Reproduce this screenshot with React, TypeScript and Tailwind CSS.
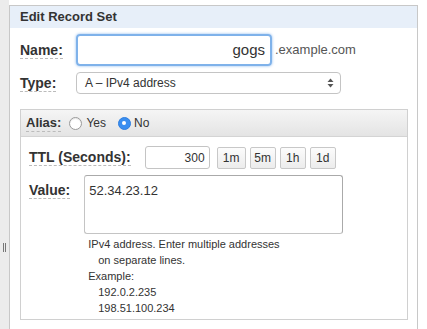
export default function App() {
    const label = "font-bold text-[#333] border-b border-dashed border-[#bbb] leading-[16px]";

    return (
        <div className="flex min-h-screen bg-white font-['Liberation_Sans',Arial,sans-serif] text-[#333]">
            {/* left resize strip */}
            <div className="w-[9px] shrink-0 bg-[#ececec] flex justify-center pt-[243px]">
                <div className="flex gap-[1px] h-[9px]">
                    <div className="w-[1px] bg-[#777]" />
                    <div className="w-[1px] bg-[#777]" />
                </div>
            </div>

            <div className="pt-[5px]">
                <div className="w-[409px] border border-b-0 border-[#c8c8c8] bg-white pb-[30px]">
                    <div className="h-[22px] bg-[#e7eff9] px-[10px] flex items-center text-[13px] font-bold text-[#333]">
                        Edit Record Set
                    </div>

                    <div className="px-[10px] pt-[6px]">
                        {/* Name */}
                        <div className="flex items-center h-[32px]">
                            <div className="w-[56px]">
                                <span className={`${label} text-[14px]`}>Name:</span>
                            </div>
                            <div className="w-[196px] h-[32px] rounded-[4px] border-2 border-[#7fb2ea] shadow-[0_0_3px_#8bb9ee] flex items-center justify-end pr-[5px] text-[15px] text-[#333]">
                                gogs
                            </div>
                            <span className="ml-[3px] text-[13px] text-[#555]">.example.com</span>
                        </div>

                        {/* Type */}
                        <div className="flex items-center h-[22px] mt-[6px]">
                            <div className="w-[56px]">
                                <span className={`${label} text-[14px]`}>Type:</span>
                            </div>
                            <div className="w-[265px] h-[22px] rounded-[4px] border border-[#c4c4c4] flex items-center justify-between pl-[8px] pr-[6px] text-[12px] text-[#333]">
                                <span>A – IPv4 address</span>
                                <svg width="7" height="10" viewBox="0 0 7 10">
                                    <path d="M3.5 0.5 L6.5 4 L0.5 4 Z" fill="#555" />
                                    <path d="M3.5 9.5 L6.5 6 L0.5 6 Z" fill="#555" />
                                </svg>
                            </div>
                        </div>

                        {/* Alias panel */}
                        <div className="w-[388px] mt-[15px] border border-[#d0d0d0]">
                            <div className="h-[27px] bg-gradient-to-b from-[#f5f5f5] to-[#e4e4e4] border-b border-[#d4d4d4] flex items-center pl-[5px] text-[13px]">
                                <span className={`${label} text-[13px]`}>Alias:</span>
                                <div className="ml-[8px] w-[13px] h-[13px] rounded-full border border-[#9a9a9a] bg-white shadow-[inset_0_1px_1px_rgba(0,0,0,0.1)]" />
                                <span className="ml-[4px] text-[12px] text-[#333]">Yes</span>
                                <div className="ml-[12px] w-[13px] h-[13px] rounded-full bg-[#3a8ef0] border border-[#2f7fe0] flex items-center justify-center">
                                    <div className="w-[4px] h-[4px] rounded-full bg-white" />
                                </div>
                                <span className="ml-[3px] text-[12px] text-[#333]">No</span>
                            </div>

                            <div className="pl-[8px] pt-[9px] pb-[3px]">
                                {/* TTL */}
                                <div className="flex items-center h-[23px]">
                                    <span className={`${label} text-[14px]`}>TTL (Seconds):</span>
                                    <div className="ml-[14px] w-[65px] h-[23px] rounded-[3px] border border-[#c4c4c4] flex items-center justify-end pr-[4px] text-[12px] text-[#333]">
                                        300
                                    </div>
                                    <div className="ml-[7px] flex gap-[4px]">
                                        {[
                                            { t: "1m", w: "w-[29px]" },
                                            { t: "5m", w: "w-[26px]" },
                                            { t: "1h", w: "w-[26px]" },
                                            { t: "1d", w: "w-[26px]" },
                                        ].map((b) => (
                                            <div
                                                key={b.t}
                                                className={`${b.w} h-[22px] rounded-[2px] border border-[#c8c8c8] bg-gradient-to-b from-[#fcfcfc] to-[#ececec] flex items-center justify-center text-[12px] text-[#333]`}
                                            >
                                                {b.t}
                                            </div>
                                        ))}
                                    </div>
                                </div>

                                {/* Value */}
                                <div className="flex mt-[6px]">
                                    <div className="pt-[3px]">
                                        <span className={`${label} text-[14px]`}>Value:</span>
                                    </div>
                                    <div className="ml-[14px]">
                                        <div className="w-[259px] h-[59px] rounded-[3px] border border-[#aaa] border-l-[#c4c4c4] border-b-[#c4c4c4] px-[4px] pt-[7px] text-[13px] text-[#333] leading-[16px]">
                                            52.34.23.12
                                        </div>
                                        <div className="pl-[4px] mt-[2px] text-[11px] leading-[16px] text-[#333]">
                                            <div>IPv4 address. Enter multiple addresses</div>
                                            <div className="pl-[10px]">on separate lines.</div>
                                            <div>Example:</div>
                                            <div className="pl-[10px]">192.0.2.235</div>
                                            <div className="pl-[10px]">198.51.100.234</div>
                                        </div>
                                    </div>
                                </div>
                            </div>
                        </div>
                    </div>
                </div>
            </div>
        </div>
    );
}
